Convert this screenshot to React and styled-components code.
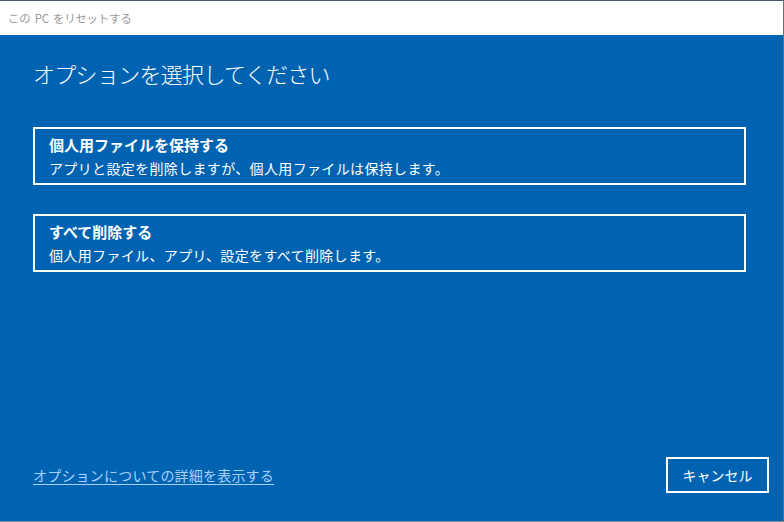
import React from "react";
import styled, { createGlobalStyle } from "styled-components";

const GlobalStyle = createGlobalStyle`
  html, body {
    margin: 0;
    padding: 0;
    background: #6b6f74;
  }
  body {
    font-family: "Noto Sans CJK JP", "Noto Sans", sans-serif;
  }
`;

const options = [
  {
    title: "個人用ファイルを保持する",
    desc: "アプリと設定を削除しますが、個人用ファイルは保持します。",
  },
  {
    title: "すべて削除する",
    desc: "個人用ファイル、アプリ、設定をすべて削除します。",
  },
];

const App = () => {
  return (
    <>
      <GlobalStyle />
      <Window>
        <TitleBar>この PC をリセットする</TitleBar>
        <Body>
          <Content>
            <Heading>オプションを選択してください</Heading>
            <OptionList>
              {options.map((opt) => (
                <OptionBox key={opt.title}>
                  <OptionTitle>{opt.title}</OptionTitle>
                  <OptionDesc>{opt.desc}</OptionDesc>
                </OptionBox>
              ))}
            </OptionList>
          </Content>
          <Footer>
            <MoreLink href="#">オプションについての詳細を表示する</MoreLink>
            <CancelButton>キャンセル</CancelButton>
          </Footer>
        </Body>
      </Window>
    </>
  );
};

const Window = styled.div`
  width: 783px;
  height: 521px;
  display: flex;
  flex-direction: column;
  background: #0063b1;
  border-bottom: 1px solid #8a8f95;
`;

const TitleBar = styled.div`
  height: 34px;
  border-top: 1px solid #4a5a6c;
  background: #ffffff;
  color: #9a9a9a;
  font-size: 11.5px;
  line-height: 34px;
  padding-left: 8px;
  letter-spacing: -0.3px;
  word-spacing: 2px;
`;

const Body = styled.div`
  flex: 1;
  display: flex;
  flex-direction: column;
  justify-content: space-between;
  color: #ffffff;
`;

const Content = styled.div`
  padding: 20px 37px 0 33px;
`;

const Heading = styled.h1`
  margin: 0;
  font-size: 22px;
  font-weight: 300;
  letter-spacing: -0.7px;
  line-height: 36px;
`;

const OptionList = styled.div`
  margin-top: 36px;
  display: flex;
  flex-direction: column;
  gap: 29px;
`;

const OptionBox = styled.div`
  border: 2px solid #ffffff;
  padding: 5px 14px 0;
  height: 49px;
`;

const OptionTitle = styled.div`
  font-size: 15px;
  font-weight: 700;
  line-height: 22px;
`;

const OptionDesc = styled.div`
  font-size: 14px;
  line-height: 24px;
  letter-spacing: 0.35px;
`;

const Footer = styled.div`
  display: flex;
  align-items: center;
  justify-content: space-between;
  padding: 0 14px 28px 33px;
`;

const MoreLink = styled.a`
  color: #a6d2ff;
  font-size: 14px;
  letter-spacing: 0.2px;
  text-decoration: underline;
  text-underline-offset: 3px;
`;

const CancelButton = styled.button`
  width: 103px;
  height: 36px;
  border: 2px solid #ffffff;
  background: transparent;
  color: #ffffff;
  font-family: inherit;
  font-size: 14px;
  padding: 0;
  cursor: pointer;
`;

export default App;
